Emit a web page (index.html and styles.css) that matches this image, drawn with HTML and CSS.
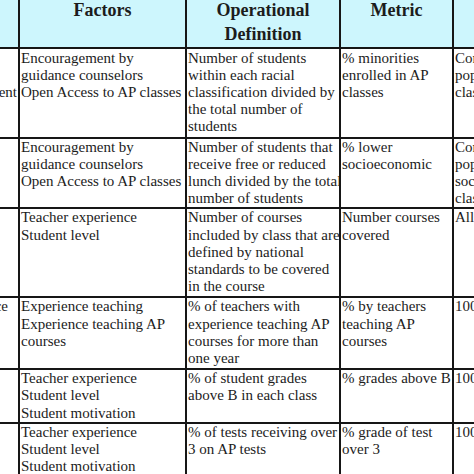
FILE: index.html
```html
<!DOCTYPE html>
<html>
<head>
<meta charset="utf-8">
<link rel="stylesheet" href="styles.css">
</head>
<body>
<div class="frame">
<table class="grid">
<colgroup><col class="c0"><col class="c1"><col class="c2"><col class="c3"><col class="c4"></colgroup>
<thead>
<tr><th></th><th>Factors</th><th>Operational<br>Definition</th><th>Metric</th><th>Standard</th></tr>
</thead>
<tbody>
<tr class="r1">
<td class="lead mid">Enrollment</td>
<td>Encouragement by<br>guidance counselors<br>Open Access to AP classes</td>
<td>Number of students<br>within each racial<br>classification divided by<br>the total number of<br>students</td>
<td>% minorities<br>enrolled in AP<br>classes</td>
<td>Compared to<br>population in<br>classes</td>
</tr>
<tr class="r2">
<td class="lead"></td>
<td>Encouragement by<br>guidance counselors<br>Open Access to AP classes</td>
<td>Number of students that<br>receive free or reduced<br>lunch divided by the total<br>number of students</td>
<td>% lower<br>socioeconomic</td>
<td>Compared to<br>population of<br>socioeconomic<br>classes</td>
</tr>
<tr class="r3">
<td class="lead"></td>
<td>Teacher experience<br>Student level</td>
<td>Number of courses<br>included by class that are<br>defined by national<br>standards to be covered<br>in the course</td>
<td>Number courses<br>covered</td>
<td>All courses</td>
</tr>
<tr class="r4">
<td class="lead short">Experience</td>
<td>Experience teaching<br>Experience teaching AP<br>courses</td>
<td>% of teachers with<br>experience teaching AP<br>courses for more than<br>one year</td>
<td>% by teachers<br>teaching AP<br>courses</td>
<td>100%</td>
</tr>
<tr class="r5">
<td class="lead"></td>
<td>Teacher experience<br>Student level<br>Student motivation</td>
<td>% of student grades<br>above B in each class</td>
<td>% grades above B</td>
<td>100%</td>
</tr>
<tr class="r6">
<td class="lead"></td>
<td>Teacher experience<br>Student level<br>Student motivation</td>
<td>% of tests receiving over<br>3 on AP tests</td>
<td>% grade of test<br>over 3</td>
<td>100%</td>
</tr>
</tbody>
</table>
</div>
</body>
</html>
```

FILE: styles.css
```css
html, body {
  margin: 0;
  padding: 0;
  background: #ffffff;
}
.frame {
  width: 474px;
  height: 474px;
  overflow: hidden;
}
.grid {
  border-collapse: collapse;
  table-layout: fixed;
  width: 755px;
  margin-left: -83px;
  margin-top: -6px;
  font-family: "Liberation Serif", "Times New Roman", serif;
  color: #1c1c1c;
}
.c0 { width: 101px; }
.c1 { width: 167px; }
.c2 { width: 154px; }
.c3 { width: 113px; }
.c4 { width: 220px; }
.grid th, .grid td {
  border: 2px solid #161616;
  vertical-align: top;
  white-space: nowrap;
  overflow: hidden;
}
.grid th {
  background: #cdf6fd;
  font-size: 18px;
  font-weight: bold;
  line-height: 24.5px;
  padding: 1.5px 2px 0;
  text-align: center;
}
.grid td {
  font-size: 15px;
  line-height: 17.2px;
  padding: 0 1px;
  text-align: left;
}
.r1 td { padding-top: 1px; padding-bottom: 1px; }
.r3 td { padding-bottom: 1px; }
.r4 td { padding-bottom: 1px; }
.grid td.lead {
  text-align: right;
  padding-right: 1px;
}
.grid td.mid {
  vertical-align: middle;
}
.grid td.short {
  padding-right: 10px;
}
```
